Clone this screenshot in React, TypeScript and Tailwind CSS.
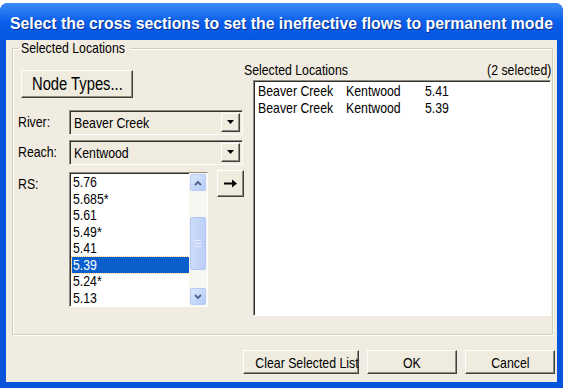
import React from 'react';

const font = { fontFamily: '"Liberation Sans", Arial, sans-serif' };

const raised =
  'border border-t-white border-l-white border-r-[#404040] border-b-[#404040] shadow-[inset_-1px_-1px_0_#8d8a7e] bg-[#efebdf]';
const sunken =
  'border border-t-[#8d8a7e] border-l-[#8d8a7e] border-r-white border-b-white shadow-[inset_1px_1px_0_#303030]';

// the screenshot's text is narrow, so squeeze Arial-metric text horizontally
function T({ children, at = 'left' }: { children: React.ReactNode; at?: 'left' | 'right' | 'center' }) {
  const o = at === 'left' ? 'origin-left' : at === 'right' ? 'origin-right' : 'origin-center';
  return <span className={`inline-block whitespace-nowrap scale-x-[0.82] ${o}`}>{children}</span>;
}

function Triangle() {
  return (
    <svg width="8" height="5" viewBox="0 0 8 5">
      <path d="M0 0 H7 L3.5 4 Z" fill="#000" />
    </svg>
  );
}

function Combo({ value }: { value: string }) {
  return (
    <div className={`${sunken} w-[174px] h-[25px] flex items-center bg-[#efebdf]`}>
      <span className="flex-1 pl-[4px] text-[15px] text-black leading-none">
        <T>{value}</T>
      </span>
      <div className={`${raised} w-[19px] h-[19px] mr-[2px] flex items-center justify-center`}>
        <Triangle />
      </div>
    </div>
  );
}

function ScrollBtn({ dir }: { dir: 'up' | 'down' }) {
  return (
    <div className="w-[16px] h-[17px] rounded-[2px] bg-gradient-to-br from-[#dbe6fd] to-[#b4cbf7] border border-[#b8cdf6] flex items-center justify-center">
      <svg width="8" height="6" viewBox="0 0 8 6">
        <path
          d={dir === 'up' ? 'M1 5 L4 2 L7 5' : 'M1 1 L4 4 L7 1'}
          stroke="#4d6185"
          strokeWidth="1.8"
          fill="none"
        />
      </svg>
    </div>
  );
}

export default function App() {
  const rs = ['5.76', '5.685*', '5.61', '5.49*', '5.41', '5.39', '5.24*', '5.13'];
  const picked = [
    ['Beaver Creek', 'Kentwood', '5.41'],
    ['Beaver Creek', 'Kentwood', '5.39'],
  ];

  return (
    <div className="w-[563px] h-[388px] bg-white overflow-hidden" style={font}>
      <div className="mt-[3px] h-[385px] flex flex-col rounded-t-[8px] bg-[#0753dc] px-[6px] pb-[6px]">
        {/* title bar */}
        <div className="h-[37px] -mx-[6px] rounded-t-[8px] bg-gradient-to-b from-[#3a8cf8] via-[#0a5ee9] to-[#0556e0] flex items-center pl-[10px] pt-[3px] overflow-hidden">
          <span className="inline-block whitespace-nowrap origin-left scale-x-[0.93] text-white font-bold text-[17px] leading-none [text-shadow:1px_1px_0_#0a2f8a]">
            Select the cross sections to set the ineffective flows to permanent mode
          </span>
        </div>

        {/* body */}
        <div className="flex-1 bg-[#f1ece1] flex flex-col text-black text-[15px]">
          <div className="relative mt-[8px] ml-[6px] mr-[4px] h-[287px] border border-[#d0cdbf] shadow-[inset_1px_1px_0_#fff,1px_1px_0_#fff] flex pl-[5px]">
            <span className="absolute -top-[9px] left-[5px] w-[112px] px-[3px] bg-[#f1ece1] leading-none text-[15px]">
              <T>Selected Locations</T>
            </span>

            {/* left column */}
            <div className="w-[226px] flex flex-col">
              <div className="pl-[3px] pt-[21px]">
                <button className={`${raised} w-[112px] h-[28px] text-[18px] leading-none`}>
                  <T at="center">Node Types...</T>
                </button>
              </div>
              <div className="mt-[12px] flex items-center">
                <span className="w-[51px]"><T>River:</T></span>
                <Combo value="Beaver Creek" />
              </div>
              <div className="mt-[5px] flex items-center">
                <span className="w-[51px]"><T>Reach:</T></span>
                <Combo value="Kentwood" />
              </div>
              <div className="mt-[7px] flex items-start">
                <span className="w-[51px] pt-[1px]"><T>RS:</T></span>
                <div className={`${sunken} w-[139px] h-[135px] bg-white flex`}>
                  <div className="flex-1 pt-[1px] pl-[2px]">
                    {rs.map((v) => (
                      <div
                        key={v}
                        className={`h-[16.5px] leading-[16.5px] pl-[1px] ${
                          v === '5.39' ? 'bg-[#0a5fcc] text-white outline outline-1 outline-dotted outline-[#f3c26b]' : ''
                        }`}
                      >
                        <T>{v}</T>
                      </div>
                    ))}
                  </div>
                  <div className="w-[18px] bg-[#f7f6f1] flex flex-col items-center pt-[1px] pb-[1px]">
                    <ScrollBtn dir="up" />
                    <div className="mt-[26px] w-[16px] h-[53px] rounded-[2px] bg-gradient-to-r from-[#cfdcfb] to-[#bccff9] border border-[#b1c7f5] flex flex-col items-center justify-center gap-[2px]">
                      <div className="w-[6px] h-[1px] bg-[#e8efff]" />
                      <div className="w-[6px] h-[1px] bg-[#e8efff]" />
                      <div className="w-[6px] h-[1px] bg-[#e8efff]" />
                    </div>
                    <div className="flex-1" />
                    <ScrollBtn dir="down" />
                  </div>
                </div>
                <button className={`${raised} ml-[9px] -mt-[2px] w-[27px] h-[27px] flex items-center justify-center`}>
                  <svg width="14" height="9" viewBox="0 0 14 9">
                    <path d="M0 4.5 H10" stroke="#000" strokeWidth="2" />
                    <path d="M8 0.5 L13 4.5 L8 8.5 Z" fill="#000" />
                  </svg>
                </button>
              </div>
            </div>

            {/* right column */}
            <div className="flex-1 flex flex-col pt-[12px]">
              <div className="flex justify-between h-[17px] leading-[17px] pr-[1px]">
                <span><T>Selected Locations</T></span>
                <span><T at="right">(2 selected)</T></span>
              </div>
              <div className={`${sunken} mt-[2px] ml-[9px] mr-[1px] h-[236px] bg-white pt-[2px] pl-[4px]`}>
                {picked.map((r, i) => (
                  <div key={i} className="flex h-[16.5px] leading-[16.5px]">
                    <span className="w-[88px]"><T>{r[0]}</T></span>
                    <span className="w-[79px]"><T>{r[1]}</T></span>
                    <span><T>{r[2]}</T></span>
                  </div>
                ))}
              </div>
            </div>
          </div>

          {/* bottom buttons */}
          <div className="mt-[15px] flex justify-end gap-[8px] pr-[2px]">
            <button className={`${raised} w-[116px] h-[24px] leading-none`}>
              <T at="center">Clear Selected List</T>
            </button>
            <button className={`${raised} w-[90px] h-[24px] leading-none`}>
              <T at="center">OK</T>
            </button>
            <button className={`${raised} w-[90px] h-[24px] leading-none`}>
              <T at="center">Cancel</T>
            </button>
          </div>
        </div>
      </div>
    </div>
  );
}
